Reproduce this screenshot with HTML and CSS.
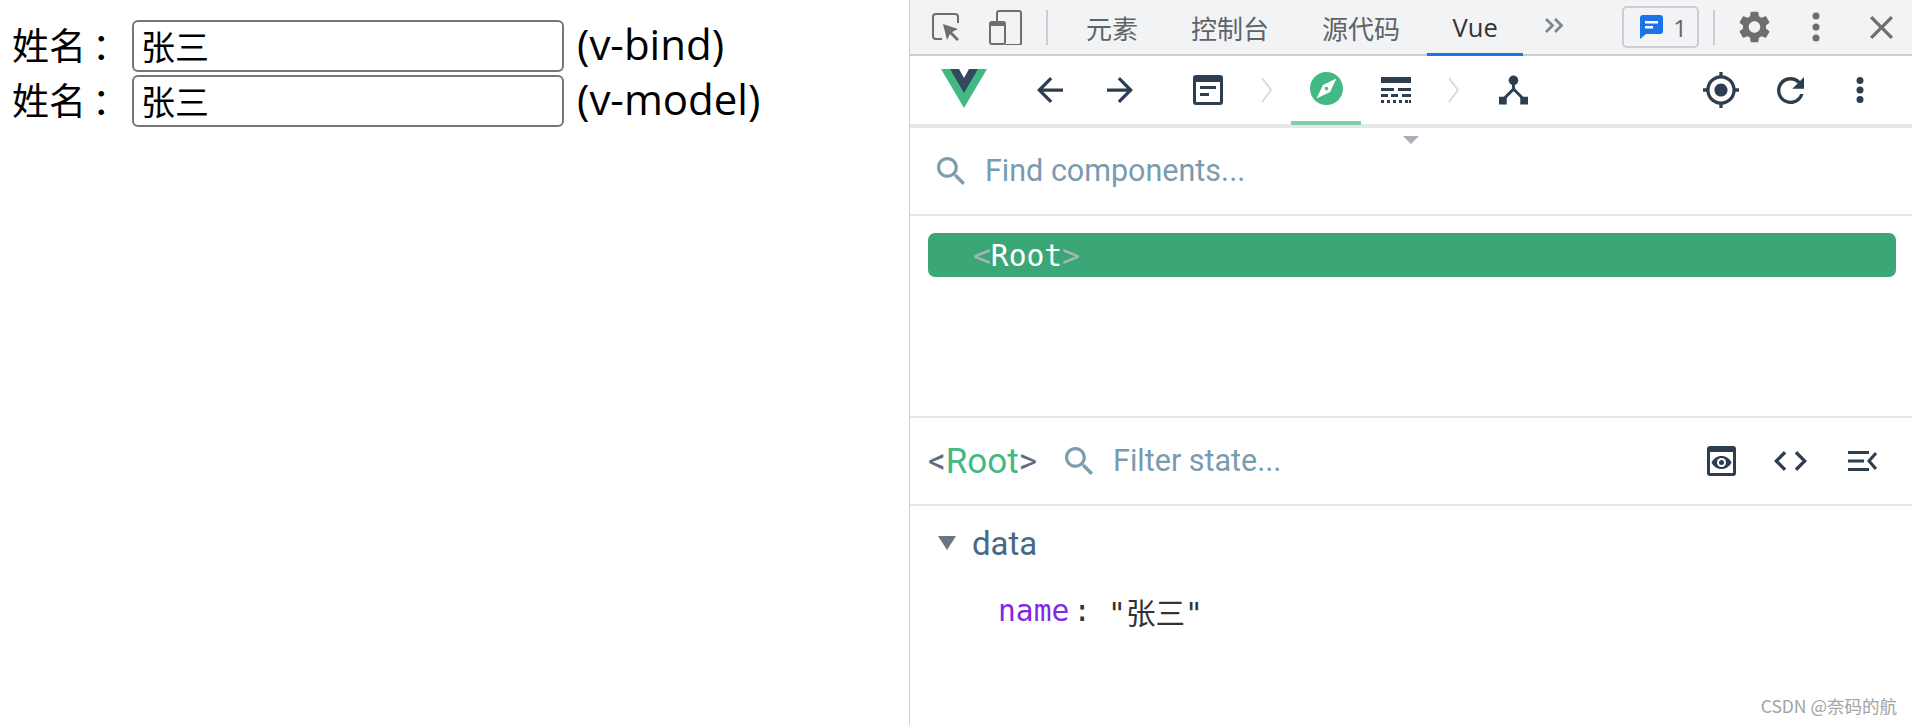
FILE: index.html
```html
<!DOCTYPE html>
<html lang="zh-CN">
<head>
    <meta charset="UTF-8">
    <title>Vue v-model</title>
    <link rel="stylesheet" href="styles.css">
</head>
<body>
    <div class="page-pane">
        <div class="field-row">
            <label class="field-label" for="bind">姓名<span class="field-colon">：</span></label>
            <input class="field-input" id="bind" type="text" value="张三">
            <span class="field-note">(v-bind)</span>
        </div>
        <div class="field-row">
            <label class="field-label" for="model">姓名<span class="field-colon">：</span></label>
            <input class="field-input" id="model" type="text" value="张三">
            <span class="field-note">(v-model)</span>
        </div>
    </div>

    <div class="devtools">
        <div class="tabbar">
            <svg class="ico-inspect" viewBox="0 0 28 28"><path d="M10 26H4a3 3 0 0 1-3-3V4a3 3 0 0 1 3-3h19a3 3 0 0 1 3 3v6" fill="none" stroke="#6e6e6e" stroke-width="2"/><path d="M11 11l15 5-6 3 7 7-2 2-7-7-3 6z" fill="#6e6e6e"/></svg>
            <svg class="ico-device" viewBox="0 0 33 35"><path d="M8 12V3a2 2 0 0 1 2-2h20a2 2 0 0 1 2 2v30a2 2 0 0 1-2 2H16" fill="none" stroke="#6e6e6e" stroke-width="2"/><rect x="1" y="12" width="15" height="22" rx="2" fill="none" stroke="#6e6e6e" stroke-width="2"/><rect x="1" y="12" width="15" height="4" fill="#6e6e6e"/></svg>
            <span class="tab-sep"></span>
            <div class="tabs">
                <span class="tab">元素</span>
                <span class="tab">控制台</span>
                <span class="tab">源代码</span>
                <span class="tab tab-active">Vue</span>
            </div>
            <svg class="ico-more-tabs" viewBox="0 0 19 15"><path d="M1 1l6.500 6.500L1 14M10 1l6.500 6.500L10 14" fill="none" stroke="#80868b" stroke-width="2.800"/></svg>
            <div class="issues">
                <svg class="ico-chat" viewBox="0 0 23 24"><path d="M3 0h17a3 3 0 0 1 3 3v13a3 3 0 0 1-3 3H6l-6 5V3a3 3 0 0 1 3-3z" fill="#1a73e8"/><path d="M5 6h13v2.500H5zM5 11h8v2.500H5z" fill="#fff"/></svg>
                <span class="issues-count">1</span>
            </div>
            <span class="tab-sep tab-sep-right"></span>
            <svg class="ico-gear" viewBox="2.400 2 19.200 20"><path fill="#6e6e6e" d="M19.140 12.940c.04-.3.06-.61.06-.94 0-.32-.02-.64-.07-.94l2.030-1.580c.18-.14.23-.41.12-.61l-1.920-3.320c-.12-.22-.37-.29-.59-.22l-2.390.96c-.5-.38-1.030-.7-1.620-.94l-.36-2.540c-.04-.24-.24-.41-.48-.41h-3.840c-.24 0-.43.17-.47.41l-.36 2.540c-.59.24-1.130.57-1.620.94l-2.390-.96c-.22-.08-.47 0-.59.22L2.740 8.870c-.12.21-.08.47.12.61l2.030 1.580c-.05.3-.09.63-.09.94s.02.64.07.94l-2.030 1.580c-.18.14-.23.41-.12.61l1.920 3.320c.12.22.37.29.59.22l2.390-.96c.5.38 1.030.7 1.620.94l.36 2.540c.05.24.24.41.48.41h3.840c.24 0 .44-.17.47-.41l.36-2.540c.59-.24 1.130-.56 1.620-.94l2.390.96c.22.08.47 0 .59-.22l1.920-3.320c.12-.22.07-.47-.12-.61l-2.010-1.580zM12 15.600c-1.980 0-3.600-1.620-3.600-3.600s1.620-3.600 3.600-3.600 3.600 1.620 3.600 3.600-1.620 3.600-3.600 3.600z"/></svg>
            <svg class="ico-kebab-top" viewBox="0 0 8 30"><circle cx="4" cy="4" r="3.500" fill="#6e6e6e"/><circle cx="4" cy="15" r="3.500" fill="#6e6e6e"/><circle cx="4" cy="26" r="3.500" fill="#6e6e6e"/></svg>
            <svg class="ico-close" viewBox="5 5 14 14"><path fill="#6e6e6e" d="M19 6.410L17.590 5 12 10.590 6.410 5 5 6.410 10.590 12 5 17.590 6.410 19 12 13.410 17.590 19 19 17.590 13.410 12z"/></svg>
        </div>

        <div class="navbar">
            <svg class="ico-vue" viewBox="0 0 46 39"><path d="M0 0h10l13 22L36 0h10L23 39z" fill="#42b883"/><path d="M9 0h9l5 9 5-9h9L23 24z" fill="#35495e"/></svg>
            <svg class="ico-back" viewBox="4 4 16 16"><path class="dark" d="M20 11H7.830l5.590-5.590L12 4l-8 8 8 8 1.410-1.410L7.830 13H20v-2z"/></svg>
            <svg class="ico-forward" viewBox="4 4 16 16"><path class="dark" d="M12 4l-1.410 1.410L16.170 11H4v2h12.170l-5.580 5.590L12 20l8-8z"/></svg>
            <svg class="ico-page" viewBox="0 0 30 30"><rect width="30" height="30" rx="3" class="dark"/><rect x="3" y="7" width="24" height="20" fill="#fff"/><path class="dark" d="M7 11h16v3H7zM7 18h9v3H7z"/></svg>
            <svg class="ico-crumb" viewBox="0 0 11 26"><path d="M1 1l9 12-9 12" fill="none" stroke="#d4d4d4" stroke-width="1.500"/></svg>
            <div class="nav-active">
                <svg class="ico-compass" viewBox="2 2 20 20"><path fill="#42b883" d="M12 10.900c-.61 0-1.100.49-1.100 1.100s.49 1.100 1.100 1.100c.61 0 1.100-.49 1.100-1.100s-.49-1.100-1.100-1.100zM12 2C6.480 2 2 6.480 2 12s4.480 10 10 10 10-4.480 10-10S17.520 2 12 2zm2.190 12.190L6 18l3.810-8.190L18 6l-3.810 8.190z"/></svg>
            </div>
            <svg class="ico-timeline" viewBox="0 0 30 26"><path class="dark" d="M0 0h30v6H0zM0 11h13v3H0zM17 11h13v3H17zM0 17h7v3H0zM10 17h7v3h-7zM21 17h9v3h-9zM0 23h3v3H0zM6 23h3v3H6zM12 23h3v3h-3zM18 23h3v3h-3zM24 23h3v3h-3zM28 23h2v3h-2z"/></svg>
            <svg class="ico-crumb ico-crumb-2" viewBox="0 0 11 26"><path d="M1 1l9 12-9 12" fill="none" stroke="#d4d4d4" stroke-width="1.500"/></svg>
            <svg class="ico-tree" viewBox="0 0 30 30"><circle class="dark" cx="15" cy="5" r="5"/><path d="M15 9v5L5 24M15 14l10 10" fill="none" stroke="#2c3e50" stroke-width="3"/><path class="dark" d="M0 22h8v8H0zM22 22h8v8h-8z"/></svg>
            <div class="nav-right">
                <svg class="ico-target" viewBox="1 1 22 22"><path class="dark" d="M12 8c-2.210 0-4 1.790-4 4s1.790 4 4 4 4-1.790 4-4-1.790-4-4-4zm8.940 3c-.46-4.170-3.770-7.480-7.940-7.940V1h-2v2.060C6.830 3.520 3.520 6.830 3.060 11H1v2h2.060c.46 4.170 3.770 7.480 7.940 7.940V23h2v-2.060c4.170-.46 7.480-3.770 7.940-7.940H23v-2h-2.060zM12 19c-3.870 0-7-3.130-7-7s3.130-7 7-7 7 3.130 7 7-3.130 7-7 7z"/></svg>
                <svg class="ico-refresh" viewBox="4 4 16 16"><path class="dark" d="M17.650 6.350C16.200 4.900 14.210 4 12 4c-4.420 0-7.990 3.580-7.990 8s3.570 8 7.990 8c3.730 0 6.840-2.550 7.730-6h-2.080c-.82 2.330-3.040 4-5.650 4-3.310 0-6-2.690-6-6s2.690-6 6-6c1.660 0 3.140.69 4.220 1.780L13 11h7V4l-2.350 2.350z"/></svg>
                <svg class="ico-kebab" viewBox="0 0 8 26"><circle class="dark" cx="4" cy="3.500" r="3.500"/><circle class="dark" cx="4" cy="13" r="3.500"/><circle class="dark" cx="4" cy="22.500" r="3.500"/></svg>
            </div>
        </div>

        <div class="search-row">
            <span class="split-arrow"></span>
            <svg class="ico-search" viewBox="3 3 17.500 17.500"><path fill="#7d9cad" d="M15.500 14h-.79l-.28-.27C15.410 12.590 16 11.110 16 9.500 16 5.910 13.090 3 9.500 3S3 5.910 3 9.500 5.910 16 9.500 16c1.610 0 3.090-.59 4.230-1.570l.27.28v.79l5 4.990L20.490 19l-4.990-5zm-6 0C7.010 14 5 11.990 5 9.500S7.010 5 9.500 5 14 7.010 14 9.500 11.990 14 9.500 14z"/></svg>
            <span class="placeholder">Find components...</span>
        </div>

        <div class="tree">
            <div class="tree-item"><span class="angle">&lt;</span>Root<span class="angle">&gt;</span></div>
        </div>

        <div class="state-head">
            <span class="state-name">&lt;<span class="state-root">Root</span>&gt;</span>
            <svg class="ico-search ico-search-state" viewBox="3 3 17.500 17.500"><path fill="#7d9cad" d="M15.500 14h-.79l-.28-.27C15.410 12.590 16 11.110 16 9.500 16 5.910 13.090 3 9.500 3S3 5.910 3 9.500 5.910 16 9.500 16c1.610 0 3.090-.59 4.230-1.570l.27.28v.79l5 4.990L20.490 19l-4.990-5zm-6 0C7.010 14 5 11.990 5 9.500S7.010 5 9.500 5 14 7.010 14 9.500 11.990 14 9.500 14z"/></svg>
            <span class="placeholder">Filter state...</span>
            <div class="state-tools">
                <svg class="ico-preview" viewBox="0 0 29 30"><rect width="29" height="30" rx="3" class="dark"/><rect x="3" y="6" width="23" height="21" fill="#fff"/><path class="dark" d="M14.500 10c-4.500 0-8 2.500-10 6.500 2 4 5.500 6.500 10 6.500s8-2.500 10-6.500c-2-4-5.500-6.500-10-6.500z"/><circle cx="14.500" cy="16.500" r="4.500" fill="#fff"/><circle class="dark" cx="14.500" cy="16.500" r="2.500"/></svg>
                <svg class="ico-code" viewBox="2 6 20 12"><path class="dark" d="M9.400 16.600L4.800 12l4.600-4.600L8 6l-6 6 6 6 1.400-1.400zm5.200 0l4.600-4.600-4.600-4.600L16 6l6 6-6 6-1.400-1.400z"/></svg>
                <svg class="ico-collapse" viewBox="0 0 29 20"><path class="dark" d="M0 0h21v3H0zM0 8.500h16v3H0zM0 17h21v3H0z"/><path d="M28 2l-7 8 7 8" fill="none" stroke="#2c3e50" stroke-width="3"/></svg>
            </div>
        </div>

        <div class="state-body">
            <div class="section-title"><span class="caret"></span>data</div>
            <div class="data-row"><span class="data-key">name</span><span class="data-colon">:</span><span class="data-value">"张三"</span></div>
        </div>
    </div>

    <div class="watermark">CSDN @奈码的航</div>
</body>
</html>
```

FILE: styles.css
```css
body {
    margin: 0;
    height: 725px;
    overflow: hidden;
    display: flex;
    background: #fff;
    font-family: "Noto Sans CJK SC", sans-serif;
}
svg {
    display: block;
    flex: none;
}
.dark {
    fill: #2c3e50;
}

/* left side, the page itself */
.page-pane {
    width: 909px;
    flex: none;
    padding-top: 20px;
    box-sizing: border-box;
}
.field-row {
    display: flex;
    align-items: center;
    height: 52px;
    margin-bottom: 3px;
    padding-left: 12px;
    color: #000;
}
.field-label {
    width: 120px;
    padding-bottom: 4px;
    font-size: 37px;
    white-space: nowrap;
}
.field-colon {
    margin-left: 6px;
}
.field-input {
    width: 432px;
    height: 52px;
    box-sizing: border-box;
    padding: 0 0 2px 7px;
    border: 2px solid #767676;
    border-radius: 6px;
    font-family: "Noto Sans CJK SC", sans-serif;
    font-size: 34px;
    color: #000;
}
.field-note {
    margin-left: 13px;
    padding-bottom: 6px;
    font-family: "Open Sans", sans-serif;
    font-size: 42px;
    white-space: nowrap;
}

/* right side */
.devtools {
    flex: 1;
    min-width: 0;
    border-left: 1px solid #cdd0d4;
    display: flex;
    flex-direction: column;
}
.tabbar {
    height: 54px;
    flex: none;
    display: flex;
    align-items: center;
    background: #f1f3f4;
    border-bottom: 2px solid #cbcdd1;
}
.ico-inspect {
    width: 28px;
    height: 28px;
    margin-left: 22px;
}
.ico-device {
    width: 33px;
    height: 35px;
    margin-left: 29px;
}
.tab-sep {
    width: 2px;
    height: 35px;
    margin-left: 24px;
    background: #cbcdd1;
}
.tabs {
    display: flex;
    align-self: stretch;
    margin-left: 12px;
    gap: 1px;
}
.tab {
    display: flex;
    align-items: center;
    padding: 0 26px;
    font-size: 26px;
    color: #5f6368;
    position: relative;
}
.tab-active {
    padding: 0 25.500px;
    font-family: "Open Sans", sans-serif;
    font-size: 25.500px;
    color: #333;
}
.tab-active::after {
    content: "";
    position: absolute;
    left: 0;
    right: 0;
    bottom: -2px;
    height: 3px;
    background: #1a73e8;
}
.ico-more-tabs {
    width: 19px;
    height: 15px;
    margin: 0 0 4px 22px;
}
.issues {
    width: 77px;
    height: 42px;
    margin-left: 58px;
    box-sizing: border-box;
    border: 2px solid #cbcdd1;
    border-radius: 5px;
    display: flex;
    align-items: center;
    padding-left: 16px;
}
.ico-chat {
    width: 23px;
    height: 24px;
}
.issues-count {
    margin-left: 10px;
    font-family: "Open Sans", sans-serif;
    font-size: 24px;
    color: #5f6368;
}
.tab-sep-right {
    margin-left: 14px;
}
.ico-gear {
    width: 31px;
    height: 32px;
    margin-left: 24px;
}
.ico-kebab-top {
    width: 8px;
    height: 30px;
    margin-left: 42px;
}
.ico-close {
    width: 23px;
    height: 23px;
    margin-left: 50px;
}

.navbar {
    height: 68px;
    flex: none;
    display: flex;
    align-items: center;
    border-bottom: 4px solid #e4e6e9;
    padding-right: 48px;
}
.ico-vue {
    width: 46px;
    height: 39px;
    margin: 0 0 4px 31px;
}
.ico-back {
    width: 26px;
    height: 26px;
    margin-left: 50px;
}
.ico-forward {
    width: 26px;
    height: 26px;
    margin-left: 44px;
}
.ico-page {
    width: 30px;
    height: 30px;
    margin-left: 60px;
}
.ico-crumb {
    width: 11px;
    height: 26px;
    margin-left: 38px;
}
.nav-active {
    width: 70px;
    align-self: stretch;
    margin-left: 19px;
    display: flex;
    align-items: center;
    justify-content: center;
    border-bottom: 4px solid #7ed0a9;
    box-sizing: border-box;
    margin-bottom: -1px;
}
.ico-compass {
    width: 33px;
    height: 33px;
}
.ico-timeline {
    width: 30px;
    height: 26px;
    margin-left: 20px;
}
.ico-crumb-2 {
    margin-left: 37px;
}
.ico-tree {
    width: 29px;
    height: 30px;
    margin-left: 40px;
}
.nav-right {
    margin-left: auto;
    display: flex;
    align-items: center;
}
.ico-target {
    width: 36px;
    height: 36px;
}
.ico-refresh {
    width: 27px;
    height: 27px;
    margin-left: 38px;
}
.ico-kebab {
    width: 8px;
    height: 26px;
    margin-left: 52px;
}

.search-row {
    height: 86px;
    flex: none;
    display: flex;
    align-items: center;
    position: relative;
    padding-left: 27px;
    border-bottom: 2px solid #e4e6ea;
}
.split-arrow {
    position: absolute;
    left: 493px;
    top: 8px;
    border-left: 8.500px solid transparent;
    border-right: 8.500px solid transparent;
    border-top: 8px solid #aaaeb8;
}
.ico-search {
    width: 28px;
    height: 28px;
}
.placeholder {
    margin-left: 20px;
    padding-bottom: 1px;
    font-family: Roboto, sans-serif;
    font-size: 30.500px;
    color: #7a9bae;
}

.tree {
    height: 202px;
    flex: none;
    box-sizing: border-box;
    padding: 17px 16px 0 18px;
    border-bottom: 2px solid #e4e6ea;
}
.tree-item {
    height: 44px;
    border-radius: 7px;
    background: #3ba776;
    padding-left: 45px;
    font-family: "DejaVu Sans Mono", monospace;
    font-size: 29.600px;
    line-height: 46px;
    color: #fff;
}
.angle {
    color: #a9b4bd;
}

.state-head {
    height: 86px;
    flex: none;
    display: flex;
    align-items: center;
    padding-left: 18px;
    border-bottom: 2px solid #e4e6ea;
}
.state-name {
    font-family: Roboto, sans-serif;
    font-size: 35px;
    color: #5f6d7b;
}
.state-root {
    color: #42b883;
}
.ico-search-state {
    margin-left: 28px;
}
.state-tools {
    margin-left: auto;
    margin-right: 35px;
    display: flex;
    align-items: center;
}
.ico-preview {
    width: 29px;
    height: 30px;
}
.ico-code {
    width: 33px;
    height: 20px;
    margin-left: 38px;
}
.ico-collapse {
    width: 29px;
    height: 20px;
    margin-left: 41px;
}

.state-body {
    flex: 1;
    padding-top: 19px;
}
.section-title {
    display: flex;
    align-items: center;
    height: 36px;
    padding-left: 28px;
    font-family: Roboto, sans-serif;
    font-size: 33px;
    color: #486887;
}
.caret {
    margin-right: 16px;
    border-left: 9.500px solid transparent;
    border-right: 9.500px solid transparent;
    border-top: 14px solid #6b7684;
}
.data-row {
    display: flex;
    align-items: center;
    height: 40px;
    margin-top: 30px;
    padding-left: 88px;
    font-family: "DejaVu Sans Mono", "Noto Sans CJK SC", monospace;
    font-size: 29.600px;
    color: #333;
}
.data-key {
    color: #8128e8;
}
.data-colon {
    margin: 0 17px 0 4px;
}

.watermark {
    position: absolute;
    right: 15px;
    bottom: 7px;
    font-size: 17.500px;
    color: #a3a3a3;
}
```
